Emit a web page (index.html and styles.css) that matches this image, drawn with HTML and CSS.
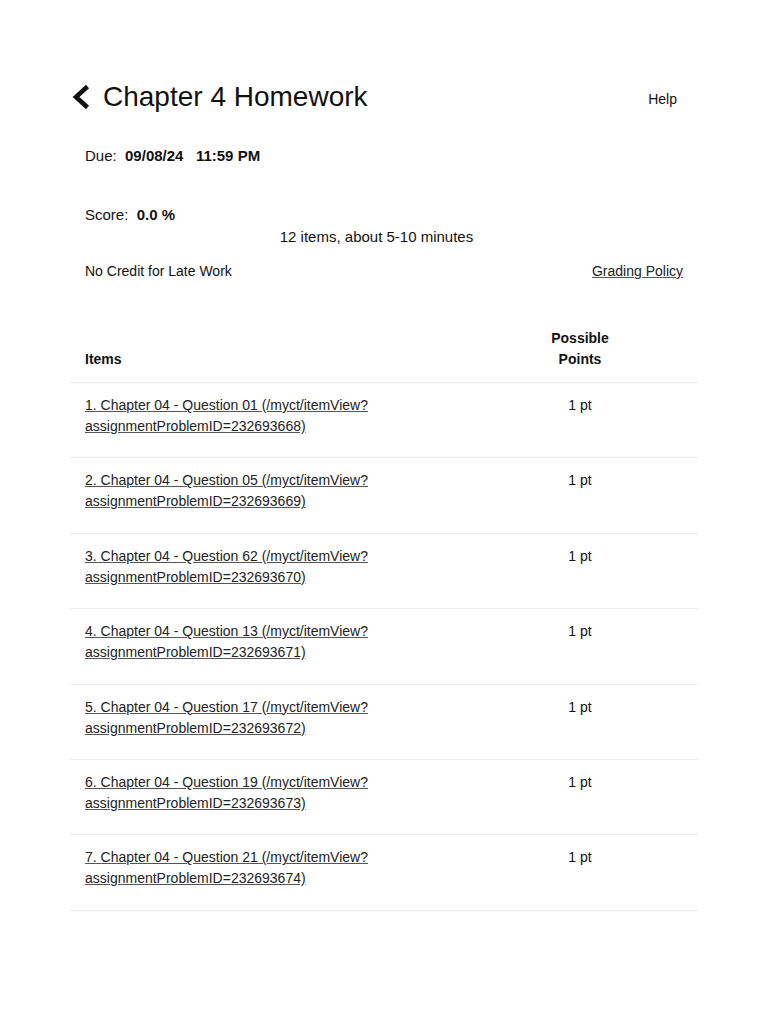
FILE: index.html
```html
<!DOCTYPE html>
<html>
<head>
<meta charset="utf-8">
<link rel="stylesheet" href="styles.css">
</head>
<body>
<div class="page">
  <header class="top">
    <h1 class="title">
      <svg class="back" viewBox="0 0 18 26" width="18" height="26"><path d="M15.5 2.5 L4 13 L15.5 23.5" fill="none" stroke="#111" stroke-width="4.6" stroke-linecap="butt" stroke-linejoin="miter"/></svg>
      <span>Chapter 4 Homework</span>
    </h1>
    <a class="help">Help</a>
  </header>
  <div class="meta">
    <p class="due">Due:&nbsp; <b>09/08/24 &nbsp; 11:59 PM</b></p>
    <p class="score">Score:&nbsp; <b>0.0 %</b></p>
    <p class="count">12 items, about 5-10 minutes</p>
    <div class="policy">
      <span>No Credit for Late Work</span>
      <a class="link">Grading Policy</a>
    </div>
  </div>
  <div class="table">
    <div class="row head">
      <div class="c1">Items</div>
      <div class="c2">Possible<br>Points</div>
    </div>
    <div class="row"><div class="c1"><a class="link">1. Chapter 04 - Question 01 (/myct/itemView?<br>assignmentProblemID=232693668)</a></div><div class="c2">1 pt</div></div>
    <div class="row"><div class="c1"><a class="link">2. Chapter 04 - Question 05 (/myct/itemView?<br>assignmentProblemID=232693669)</a></div><div class="c2">1 pt</div></div>
    <div class="row"><div class="c1"><a class="link">3. Chapter 04 - Question 62 (/myct/itemView?<br>assignmentProblemID=232693670)</a></div><div class="c2">1 pt</div></div>
    <div class="row"><div class="c1"><a class="link">4. Chapter 04 - Question 13 (/myct/itemView?<br>assignmentProblemID=232693671)</a></div><div class="c2">1 pt</div></div>
    <div class="row"><div class="c1"><a class="link">5. Chapter 04 - Question 17 (/myct/itemView?<br>assignmentProblemID=232693672)</a></div><div class="c2">1 pt</div></div>
    <div class="row"><div class="c1"><a class="link">6. Chapter 04 - Question 19 (/myct/itemView?<br>assignmentProblemID=232693673)</a></div><div class="c2">1 pt</div></div>
    <div class="row"><div class="c1"><a class="link">7. Chapter 04 - Question 21 (/myct/itemView?<br>assignmentProblemID=232693674)</a></div><div class="c2">1 pt</div></div>
  </div>
</div>
</body>
</html>
```

FILE: styles.css
```css
html, body {
  margin: 0;
  padding: 0;
  background: #fff;
}
body {
  font-family: "Liberation Sans", Arial, sans-serif;
  font-size: 14px;
  color: #111;
}
.page {
  width: 628px;
  margin: 0 auto 0 70px;
  padding-top: 81px;
}
.top {
  display: flex;
  justify-content: space-between;
  align-items: center;
  height: 32px;
}
.title {
  display: flex;
  align-items: center;
  gap: 13px;
  margin: 0;
  font-size: 28px;
  font-weight: normal;
  line-height: 32px;
  color: #111;
}
.back {
  margin-left: 2px;
  margin-top: -1px;
}
.help {
  margin-right: 21px;
  margin-top: 4px;
  color: #111;
}
.meta {
  padding: 0 15px;
}
.meta p {
  margin: 0;
  line-height: 20px;
}
.due {
  margin-top: 33px !important;
  font-size: 15px;
}
.score {
  margin-top: 39px !important;
  font-size: 15px;
}
.count {
  margin-top: 2px !important;
  text-align: center;
  padding-right: 15px;
  font-size: 15px;
}
.policy {
  display: flex;
  justify-content: space-between;
  margin-top: 14px;
  line-height: 20px;
}
.link {
  color: #222;
  text-decoration: underline;
  text-decoration-color: #555;
}
.table {
  margin-top: 47px;
}
.row {
  display: grid;
  grid-template-columns: 392px 1fr;
  border-bottom: 1px solid #ececec;
  line-height: 21px;
}
.row > div {
  padding: 12px 15px 20.4px;
}
.row .c2 {
  text-align: center;
  padding-left: 0;
  padding-right: 0;
}
.head {
  font-weight: bold;
  align-items: end;
}
.head > div {
  padding-top: 0;
  padding-bottom: 12px;
}
```
